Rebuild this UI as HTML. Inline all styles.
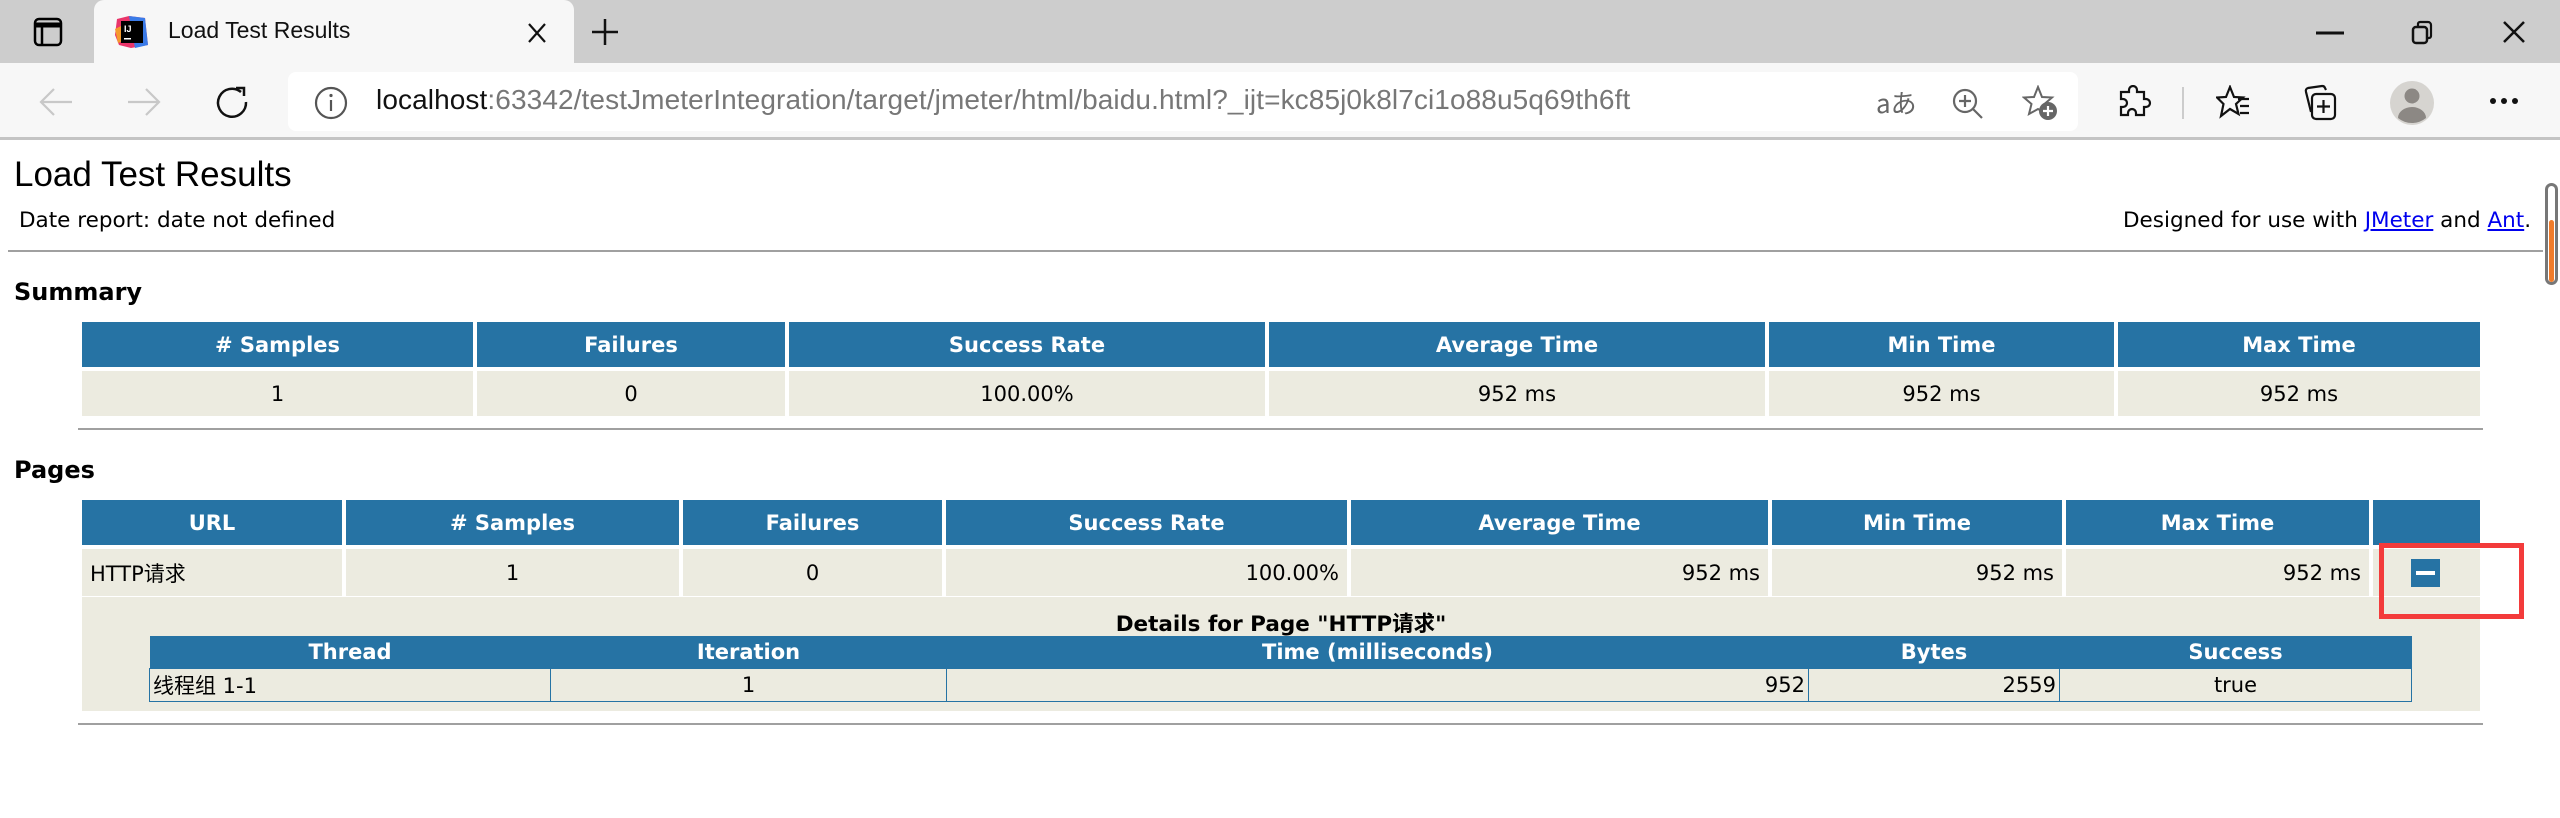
<!DOCTYPE html>
<html><head><meta charset="utf-8">
<style>
*{margin:0;padding:0;box-sizing:border-box}
body{width:2560px;height:818px;overflow:hidden;background:#fff;position:relative;font-family:"DejaVu Sans","Noto Sans CJK SC",sans-serif;color:#000}
.abs{position:absolute}
.tabbar{left:0;top:0;width:2560px;height:63px;background:#cdcdcd}
.tab{left:94px;top:0;width:480px;height:63px;background:#f7f7f7;border-radius:10px 10px 0 0}
.toolbar{left:0;top:63px;width:2560px;height:77px;background:#f7f7f7;border-bottom:3px solid #c4c4c4}
.addr{left:288px;top:72px;width:1790px;height:59px;background:#fff;border-radius:8px}
.ui{font-family:"Liberation Sans",sans-serif}
table{border-collapse:separate;border-spacing:4px;position:absolute}
.t th{background:#2673a4;color:#fff;font-weight:bold;font-size:21px;height:45px;padding:0}
.t td{background:#ecebe0;font-size:21px;height:45px;padding:0 8px}
.sub{border-collapse:collapse;position:absolute}
.sub th{background:#2673a4;color:#fff;font-size:21px;height:32px;padding:0;font-weight:bold}
.sub td{background:#ecebe0;font-size:21px;height:33px;border:1.5px solid #2673a4;padding:0 3px}
hr{position:absolute;border:0;height:2px;background:#a0a0a0}
</style></head><body>
<div class="abs tabbar"></div>
<div class="abs tab"></div>
<svg class="abs" style="left:33px;top:17px" width="30" height="30" viewBox="0 0 30 30"><rect x="2" y="2" width="26" height="26" rx="4" fill="none" stroke="#000" stroke-width="2.5"/><line x1="2" y1="8" x2="28" y2="8" stroke="#000" stroke-width="5"/><line x1="9" y1="8" x2="9" y2="28" stroke="#000" stroke-width="2.5"/></svg>
<svg class="abs" style="left:115px;top:15px" width="34" height="34" viewBox="0 0 34 34"><polygon points="2,4 14,1 30,3 33,30 16,33 4,30 0,20" fill="#e9356a"/><polygon points="14,1 30,3 33,30 20,33" fill="#3a7be8"/><polygon points="0,14 8,10 8,26 3,28" fill="#f59a2c"/><rect x="6" y="6" width="22" height="22" fill="#000"/><text x="9" y="17" fill="#fff" font-size="9" font-weight="bold" font-family="Liberation Sans">IJ</text><rect x="9" y="23" width="7" height="1.5" fill="#fff"/></svg>
<div class="abs ui" style="left:168px;top:17px;font-size:23px;color:#111">Load Test Results</div>
<svg class="abs" style="left:527px;top:22px" width="20" height="22"><path d="M2 2L18 20M18 2L2 20" stroke="#111" stroke-width="2.2"/></svg>
<svg class="abs" style="left:590px;top:17px" width="30" height="30"><path d="M15 2V28M2 15H28" stroke="#111" stroke-width="2.5"/></svg>
<svg class="abs" style="left:2316px;top:30px" width="30" height="6"><line x1="0" y1="3" x2="28" y2="3" stroke="#111" stroke-width="3"/></svg>
<svg class="abs" style="left:2411px;top:20px" width="24" height="26"><rect x="2" y="7" width="14" height="16" rx="3" fill="none" stroke="#111" stroke-width="2.5"/><path d="M7 6V4a2 2 0 0 1 2-2h8a3 3 0 0 1 3 3v11a2 2 0 0 1-2 2h-1" fill="none" stroke="#111" stroke-width="2.2"/></svg>
<svg class="abs" style="left:2502px;top:20px" width="24" height="24"><path d="M2 2L22 22M22 2L2 22" stroke="#111" stroke-width="2.5"/></svg>
<div class="abs toolbar"></div>
<svg class="abs" style="left:38px;top:87px" width="36" height="30"><path d="M34 15H3M16 2L3 15L16 28" fill="none" stroke="#c8c8c8" stroke-width="2.2"/></svg>
<svg class="abs" style="left:126px;top:87px" width="36" height="30"><path d="M2 15H33M20 2L33 15L20 28" fill="none" stroke="#c8c8c8" stroke-width="2.2"/></svg>
<svg class="abs" style="left:214px;top:84px" width="36" height="36"><path d="M27 8A14 14 0 1 0 32 18" fill="none" stroke="#111" stroke-width="2.5"/><path d="M22 4H30V12" fill="none" stroke="#111" stroke-width="2.5"/></svg>
<div class="abs addr"></div>
<svg class="abs" style="left:314px;top:86px" width="34" height="34"><circle cx="17" cy="17" r="15" fill="none" stroke="#555" stroke-width="2.2"/><line x1="17" y1="14" x2="17" y2="25" stroke="#555" stroke-width="2.2"/><circle cx="17" cy="9.5" r="1.6" fill="#555"/></svg>
<div class="abs ui" style="left:376px;top:84px;font-size:28px;color:#777;white-space:nowrap;letter-spacing:0.1px"><span style="color:#111">localhost</span>:63342/testJmeterIntegration/target/jmeter/html/baidu.html?_ijt=kc85j0k8l7ci1o88u5q69th6ft</div>
<div class="abs" style="left:1876px;top:84px;font-size:26px;color:#666;font-family:'Noto Sans CJK JP',sans-serif">aあ</div>
<svg class="abs" style="left:1951px;top:87px" width="34" height="34"><circle cx="14" cy="14" r="11" fill="none" stroke="#666" stroke-width="2.2"/><path d="M14 8V20M8 14H20M22 22L31 31" stroke="#666" stroke-width="2.2"/></svg>
<svg class="abs" style="left:2022px;top:85px" width="36" height="36"><path d="M16 2L20 12L30 12.5L22.5 19L25 29L16 24L7 29L9.5 19L2 12.5L12 12Z" fill="none" stroke="#666" stroke-width="2"/><circle cx="26" cy="26" r="9" fill="#666"/><path d="M26 21V31M21 26H31" stroke="#fff" stroke-width="2.2"/></svg>
<svg class="abs" style="left:2118px;top:85px" width="34" height="34"><path d="M11 5a4 4 0 0 1 8 0v2h7v7h2a4 4 0 0 1 0 8h-2v8h-8v-2a4 4 0 0 0-8 0v2H3v-8h2a4 4 0 0 0 0-8H3V7h8z" fill="none" stroke="#111" stroke-width="2.2"/></svg>
<div class="abs" style="left:2182px;top:87px;width:2px;height:32px;background:#ccc"></div>
<svg class="abs" style="left:2216px;top:85px" width="36" height="34"><path d="M14 2L18 12L27 12.5L20 19L22.5 29L14 24L5 31L7.5 19L1 12.5L10 12Z" fill="none" stroke="#111" stroke-width="2.2"/><path d="M22 14H33M24 21H33M24 28H33" stroke="#111" stroke-width="2.2"/></svg>
<svg class="abs" style="left:2303px;top:84px" width="36" height="38"><path d="M8 28L3 8a3 3 0 0 1 2-4L19 2a3 3 0 0 1 3 2l1 2" fill="none" stroke="#111" stroke-width="2.2"/><rect x="9" y="10" width="23" height="25" rx="4" fill="none" stroke="#111" stroke-width="2.2"/><path d="M20.5 16V29M14 22.5H27" stroke="#111" stroke-width="2.2"/></svg>
<svg class="abs" style="left:2389px;top:80px" width="46" height="46"><circle cx="23" cy="23" r="22" fill="#d6d4d0"/><circle cx="23" cy="16" r="7.5" fill="#8c8884"/><path d="M9 38a14 11 0 0 1 28 0A22 22 0 0 1 9 38z" fill="#8c8884"/></svg>
<svg class="abs" style="left:2489px;top:96px" width="30" height="10"><circle cx="4" cy="5" r="3" fill="#111"/><circle cx="15" cy="5" r="3" fill="#111"/><circle cx="26" cy="5" r="3" fill="#111"/></svg>

<div class="abs ui" style="left:14px;top:155px;font-size:35px">Load Test Results</div>
<div class="abs" style="left:19px;top:208px;font-size:21.5px">Date report: date not defined</div>
<div class="abs" style="left:2123px;top:208px;font-size:21.5px;white-space:nowrap">Designed for use with <span style="color:#00e;text-decoration:underline">JMeter</span> and <span style="color:#00e;text-decoration:underline">Ant</span>.</div>
<hr style="left:8px;top:250px;width:2535px">
<div class="abs" style="left:14px;top:278px;font-size:24px;font-weight:bold">Summary</div>
<table class="t" style="left:78px;top:318px;width:2406px">
<tr><th style="width:391px"># Samples</th><th style="width:308px">Failures</th><th style="width:476px">Success Rate</th><th style="width:496px">Average Time</th><th style="width:345px">Min Time</th><th>Max Time</th></tr>
<tr style="text-align:center"><td>1</td><td>0</td><td>100.00%</td><td>952 ms</td><td>952 ms</td><td>952 ms</td></tr>
</table>
<hr style="left:78px;top:428px;width:2405px">
<div class="abs" style="left:14px;top:456px;font-size:24px;font-weight:bold">Pages</div>
<table class="t" style="left:78px;top:496px;width:2406px">
<tr><th style="width:260px">URL</th><th style="width:333px"># Samples</th><th style="width:259px">Failures</th><th style="width:401px">Success Rate</th><th style="width:417px">Average Time</th><th style="width:290px">Min Time</th><th style="width:303px">Max Time</th><th></th></tr>
<tr style="height:47px"><td style="text-align:left">HTTP请求</td><td style="text-align:center">1</td><td style="text-align:center">0</td><td style="text-align:right">100.00%</td><td style="text-align:right">952 ms</td><td style="text-align:right">952 ms</td><td style="text-align:right">952 ms</td><td><div style="width:29px;height:28px;background:#2673a4;margin-left:30px;position:relative"><div style="position:absolute;left:5px;top:12px;width:19px;height:4px;background:#fff"></div></div></td></tr>
</table>
<div class="abs" style="left:82px;top:597px;width:2398px;height:114px;background:#ecebe0"></div>
<div class="abs" style="left:82px;top:607px;width:2398px;text-align:center;font-size:21.5px;font-weight:bold">Details for Page "HTTP请求"</div>
<table class="sub" style="left:149px;top:636px;width:2263px">
<tr><th style="width:401px">Thread</th><th style="width:396px">Iteration</th><th style="width:862px">Time (milliseconds)</th><th style="width:251px">Bytes</th><th>Success</th></tr>
<tr><td>线程组 1-1</td><td style="text-align:center">1</td><td style="text-align:right">952</td><td style="text-align:right">2559</td><td style="text-align:center">true</td></tr>
</table>
<hr style="left:78px;top:723px;width:2405px">
<div class="abs" style="left:2379px;top:543px;width:145px;height:76px;border:5px solid #f33b3b"></div>
<div class="abs" style="left:2545px;top:183px;width:13px;height:102px;border:3px solid #777;border-radius:7px;background:#fff"></div>
<div class="abs" style="left:2549px;top:220px;width:5px;height:62px;background:#f07b2a;border-radius:3px"></div>
</body></html>
